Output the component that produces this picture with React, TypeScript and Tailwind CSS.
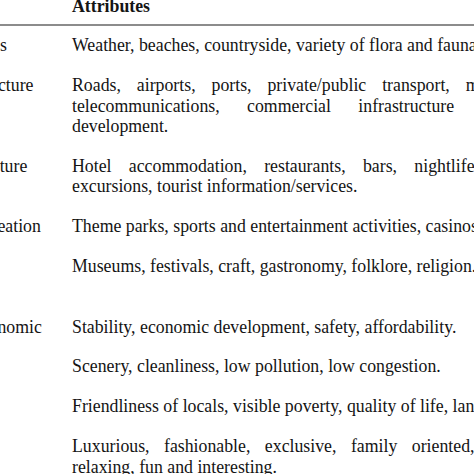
const rows: { label: string[]; lines: string[] }[] = [
  { label: ["Natural Resources"], lines: ["Weather, beaches, countryside, variety of flora and fauna."] },
  {
    label: ["General Infrastructure"],
    lines: [
      "Roads, airports, ports, private/public transport, medical",
      "telecommunications, commercial infrastructure urban",
      "development.",
    ],
  },
  {
    label: ["Tourist Infrastructure"],
    lines: [
      "Hotel accommodation, restaurants, bars, nightlife, day",
      "excursions, tourist information/services.",
    ],
  },
  { label: ["Leisure and Recreation"], lines: ["Theme parks, sports and entertainment activities, casinos."] },
  { label: ["Culture, History", "and Art"], lines: ["Museums, festivals, craft, gastronomy, folklore, religion."] },
  { label: ["Political and Economic"], lines: ["Stability, economic development, safety, affordability."] },
  { label: ["Environment"], lines: ["Scenery, cleanliness, low pollution, low congestion."] },
  { label: ["Society"], lines: ["Friendliness of locals, visible poverty, quality of life, language barriers."] },
  {
    label: ["Atmosphere"],
    lines: ["Luxurious, fashionable, exclusive, family oriented, safe,", "relaxing, fun and interesting."],
  },
];

export default function App() {
  return (
    <div className="w-[474px] h-[474px] overflow-hidden bg-white text-[#141414] font-['Liberation_Serif',serif] text-[17.8px] leading-[20.4px]">
      <div className="-ml-[124px] -mt-[4px] w-[670px]">
        {/* Header */}
        <div className="grid grid-cols-[196px_450px] pb-2 border-b-2 border-[#8c8c8c] font-bold">
          <div>Dimensions</div>
          <div>Attributes</div>
        </div>

        {/* Body */}
        <div className="pt-[9px]">
          {rows.map((row, i) => (
            <div key={i} className="grid grid-cols-[196px_450px] pb-[19.5px]">
              <div>
                {row.label.map((l, j) => (
                  <div key={j} className="whitespace-nowrap">
                    {l}
                  </div>
                ))}
              </div>
              <div>
                {row.lines.map((line, j) =>
                  j < row.lines.length - 1 ? (
                    <div key={j} className="text-justify [text-align-last:justify]">
                      {line}
                    </div>
                  ) : (
                    <div key={j} className="whitespace-nowrap">
                      {line}
                    </div>
                  ),
                )}
              </div>
            </div>
          ))}
        </div>
      </div>
    </div>
  );
}
